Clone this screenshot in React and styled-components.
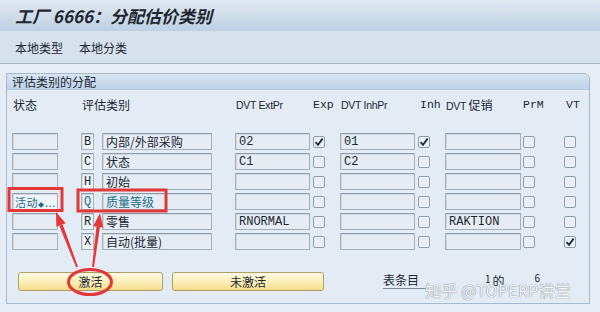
import styled, { createGlobalStyle } from "styled-components";

const GlobalStyle = createGlobalStyle`
  html, body { margin: 0; padding: 0; }
  body {
    width: 600px;
    height: 312px;
    overflow: hidden;
    background: #e6edf5;
    font-family: "Noto Sans CJK SC", "Noto Sans", sans-serif;
    color: #1b2733;
  }
`;

const COLS = "69px 21px 133px 78px 27px 78px 27px 78px 41px 20px";
const RED = "#e2383a";

const Page = styled.div`
  position: relative;
  width: 600px;
  height: 312px;
  display: flex;
  flex-direction: column;
`;

const TitleBar = styled.div`
  height: 31px;
  display: flex;
  align-items: center;
  padding-left: 15px;
  background: linear-gradient(#e1e9f1, #bdd0e2);
  font-size: 17px;
  font-weight: 700;
  font-style: italic;
  color: #1e2630;
`;

const Toolbar = styled.div`
  height: 32px;
  display: flex;
  align-items: center;
  gap: 16px;
  padding-left: 15px;
  background: #d7e1eb;
  border-bottom: 1px solid #a7b6c5;
  font-size: 12px;
`;

const Content = styled.div`
  flex: 1;
  padding: 9px 10px 8px 6px;
  display: flex;
`;

const Group = styled.div`
  flex: 1;
  border: 1px solid #a6b9cc;
  border-radius: 0 6px 0 0;
  background: #e3ecf5;
  display: flex;
  flex-direction: column;
`;

const GroupHeader = styled.div`
  height: 15px;
  line-height: 15px;
  padding-left: 5px;
  font-size: 12px;
  border-radius: 0 6px 0 0;
  background: linear-gradient(#d8e5f2, #bfd2e6);
  border-bottom: 1px solid #b7c8da;
`;

const Grid = styled.div`
  display: grid;
  grid-template-columns: ${COLS};
  padding-left: 5px;
`;

const HeadRow = styled(Grid)`
  height: 14px;
  margin-top: 6px;
  margin-bottom: 23px;
  align-items: center;
`;

const Head = styled.div`
  font-size: ${(p) => (p.$kind === "mono" ? "11.5px" : p.$kind === "dvt" ? "10.5px" : "12px")};
  font-family: ${(p) =>
    p.$kind === "mono"
      ? `"Liberation Mono", monospace`
      : p.$kind === "dvt"
      ? `"Liberation Sans", "Noto Sans CJK SC", sans-serif`
      : `"Noto Sans CJK SC", sans-serif`};
  letter-spacing: ${(p) => (p.$kind === "dvt" ? "-0.3px" : "0")};
  white-space: nowrap;
  grid-column: ${(p) => p.$span || "auto"};
  padding-left: ${(p) => p.$pad || 0}px;
`;

const CjkPart = styled.span`
  font-family: "Noto Sans CJK SC", sans-serif;
  font-size: 12px;
  letter-spacing: 0;
`;

const Rows = styled(Grid)`
  row-gap: 3px;
  grid-auto-rows: 17px;
`;

const Field = styled.div`
  width: ${(p) => p.$w}px;
  height: 17px;
  box-sizing: border-box;
  border: 1px solid #a3afbb;
  border-top-color: #8f9cab;
  border-radius: 1px;
  background: ${(p) => (p.$light ? "#eef3f8" : "#e5ecf3")};
  box-shadow: inset 1px 1px 0 #d0d9e2;
  display: flex;
  align-items: center;
  justify-content: ${(p) => (p.$center ? "center" : "flex-start")};
  padding-left: ${(p) => (p.$center ? 0 : p.$tight ? 2 : 3)}px;
  overflow: hidden;
  white-space: nowrap;
  font-size: 12px;
  font-family: ${(p) =>
    p.$mono ? `"Liberation Mono", monospace` : `"Noto Sans CJK SC", sans-serif`};
  color: ${(p) => (p.$hot ? "#1d6e8c" : "#1b2733")};
`;

const StatusText = styled.span`
  letter-spacing: 0.5px;
  font-size: 11px;
`;

const Dot = styled.span`
  font-size: 6px;
  letter-spacing: 0;
  margin-right: 1px;
`;

const Box = styled.div`
  align-self: center;
  width: 12px;
  height: 12px;
  box-sizing: border-box;
  border: 1px solid #8e9dac;
  border-radius: 2px;
  background: #e9eff5;
  display: flex;
  align-items: center;
  justify-content: center;
`;

const Check = ({ on }) => (
  <Box>
    {on && (
      <svg width="10" height="10" viewBox="0 0 10 10">
        <path d="M1.5 5.2 L4 7.8 L8.6 1.6" fill="none" stroke="#1f2a36" strokeWidth="1.8" />
      </svg>
    )}
  </Box>
);

const Footer = styled.div`
  display: flex;
  align-items: center;
  margin-top: 22px;
  padding-left: 11px;
  height: 19px;
`;

const Button = styled.div`
  width: ${(p) => p.$w}px;
  height: 19px;
  box-sizing: border-box;
  margin-right: 9px;
  border: 1px solid #b09f63;
  border-radius: 3px;
  background: linear-gradient(#fffbe2, #fbeeb4 55%, #f3dc8a);
  display: flex;
  align-items: center;
  justify-content: center;
  font-size: 12px;
`;

const Pager = styled.div`
  margin-left: 50px;
  display: flex;
  align-items: flex-start;
  font-size: 12px;
  height: 19px;
`;

const PagerLabel = styled.span`
  width: 44px;
  line-height: 16px;
  border-bottom: 1px solid #7d8b99;
`;

const Of = styled.span`
  margin-left: 2px;
`;

const Num = styled.span`
  font-size: 10px;
  line-height: 10px;
  margin-left: ${(p) => p.$ml}px;
  margin-top: ${(p) => p.$mt || 0}px;
`;

const Watermark = styled.div`
  position: absolute;
  left: 425px;
  top: 278px;
  font-size: 16px;
  color: rgba(255, 255, 255, 0.92);
  text-shadow: 0 0 1px #7f8c99, 0 0 1px #7f8c99;
  white-space: nowrap;
  letter-spacing: 0.2px;
`;

const Overlay = styled.svg`
  position: absolute;
  left: 0;
  top: 0;
  pointer-events: none;
`;

function Arrow({ from, to }) {
  const [x1, y1] = from;
  const [x2, y2] = to;
  const dx = x2 - x1;
  const dy = y2 - y1;
  const len = Math.hypot(dx, dy);
  const ux = dx / len;
  const uy = dy / len;
  const nx = -uy;
  const ny = ux;
  const bx = x2 - ux * 14;
  const by = y2 - uy * 14;
  const head = [
    [x2, y2],
    [bx + nx * 5, by + ny * 5],
    [bx - nx * 5, by - ny * 5],
  ];
  const shaft = [
    [x1 + nx * 1, y1 + ny * 1],
    [bx + nx * 1.8, by + ny * 1.8],
    [bx - nx * 1.8, by - ny * 1.8],
    [x1 - nx * 1, y1 - ny * 1],
  ];
  const pts = (a) => a.map((p) => p.join(",")).join(" ");
  return (
    <g fill={RED}>
      <polygon points={pts(shaft)} />
      <polygon points={pts(head)} />
    </g>
  );
}

const rows = [
  { key: "B", name: "内部/外部采购", ext: "02", exp: true, inh: "01", inhOn: true },
  { key: "C", name: "状态", ext: "C1", inh: "C2" },
  { key: "H", name: "初始" },
  { key: "Q", name: "质量等级", status: true, hot: true },
  { key: "R", name: "零售", ext: "RNORMAL", promo: "RAKTION" },
  { key: "X", name: "自动(批量)", vt: true },
];

export default function App() {
  return (
    <Page>
      <GlobalStyle />
      <TitleBar>工厂 6666：分配估价类别</TitleBar>
      <Toolbar>
        <span>本地类型</span>
        <span>本地分类</span>
      </Toolbar>
      <Content>
        <Group>
          <GroupHeader>评估类别的分配</GroupHeader>
          <HeadRow>
            <Head $pad={1}>状态</Head>
            <Head $span="2 / span 2" $pad={1}>评估类别</Head>
            <Head $kind="dvt" $pad={1}>DVT ExtPr</Head>
            <Head $kind="mono">Exp</Head>
            <Head $kind="dvt" $pad={1}>DVT InhPr</Head>
            <Head $kind="mono" $pad={2}>Inh</Head>
            <Head $kind="dvt" $pad={1}>
              DVT <CjkPart>促销</CjkPart>
            </Head>
            <Head $kind="mono">PrM</Head>
            <Head $kind="mono" $pad={2}>VT</Head>
          </HeadRow>
          <Rows>
            {rows.map((r) => [
              <Field $w={46} $tight $hot={r.hot} $light={r.hot} key={r.key + "s"}>
                {r.status && (
                  <StatusText>
                    活动<Dot>◆</Dot>...
                  </StatusText>
                )}
              </Field>,
              <Field $w={13} $center $mono $hot={r.hot} $light key={r.key + "k"}>
                {r.key}
              </Field>,
              <Field $w={110} $hot={r.hot} key={r.key + "n"}>
                {r.name}
              </Field>,
              <Field $w={75} $mono key={r.key + "e"}>
                {r.ext || ""}
              </Field>,
              <Check on={r.exp} key={r.key + "x"} />,
              <Field $w={75} $mono key={r.key + "i"}>
                {r.inh || ""}
              </Field>,
              <Check on={r.inhOn} key={r.key + "h"} />,
              <Field $w={76} $mono key={r.key + "p"}>
                {r.promo || ""}
              </Field>,
              <Check key={r.key + "m"} />,
              <Check on={r.vt} key={r.key + "v"} />,
            ])}
          </Rows>
          <Footer>
            <Button $w={145}>激活</Button>
            <Button $w={152}>未激活</Button>
            <Pager>
              <PagerLabel>表条目</PagerLabel>
              <Num $ml={58} $mt={2}>1</Num>
              <Of>的</Of>
              <Num $ml={30} $mt={1}>6</Num>
            </Pager>
          </Footer>
        </Group>
      </Content>
      <Watermark>知乎 @TOPERP讲堂</Watermark>
      <Overlay width="600" height="312" viewBox="0 0 600 312">
        <rect x="9" y="188.5" width="53" height="22" fill="none" stroke={RED} strokeWidth="3" />
        <rect x="78" y="190" width="88" height="21" fill="none" stroke={RED} strokeWidth="3" />
        <ellipse cx="90" cy="282" rx="21.5" ry="12.5" fill="none" stroke={RED} strokeWidth="3" />
        <Arrow from={[77, 267]} to={[56, 212]} />
        <Arrow from={[93, 267]} to={[100, 213]} />
      </Overlay>
    </Page>
  );
}
